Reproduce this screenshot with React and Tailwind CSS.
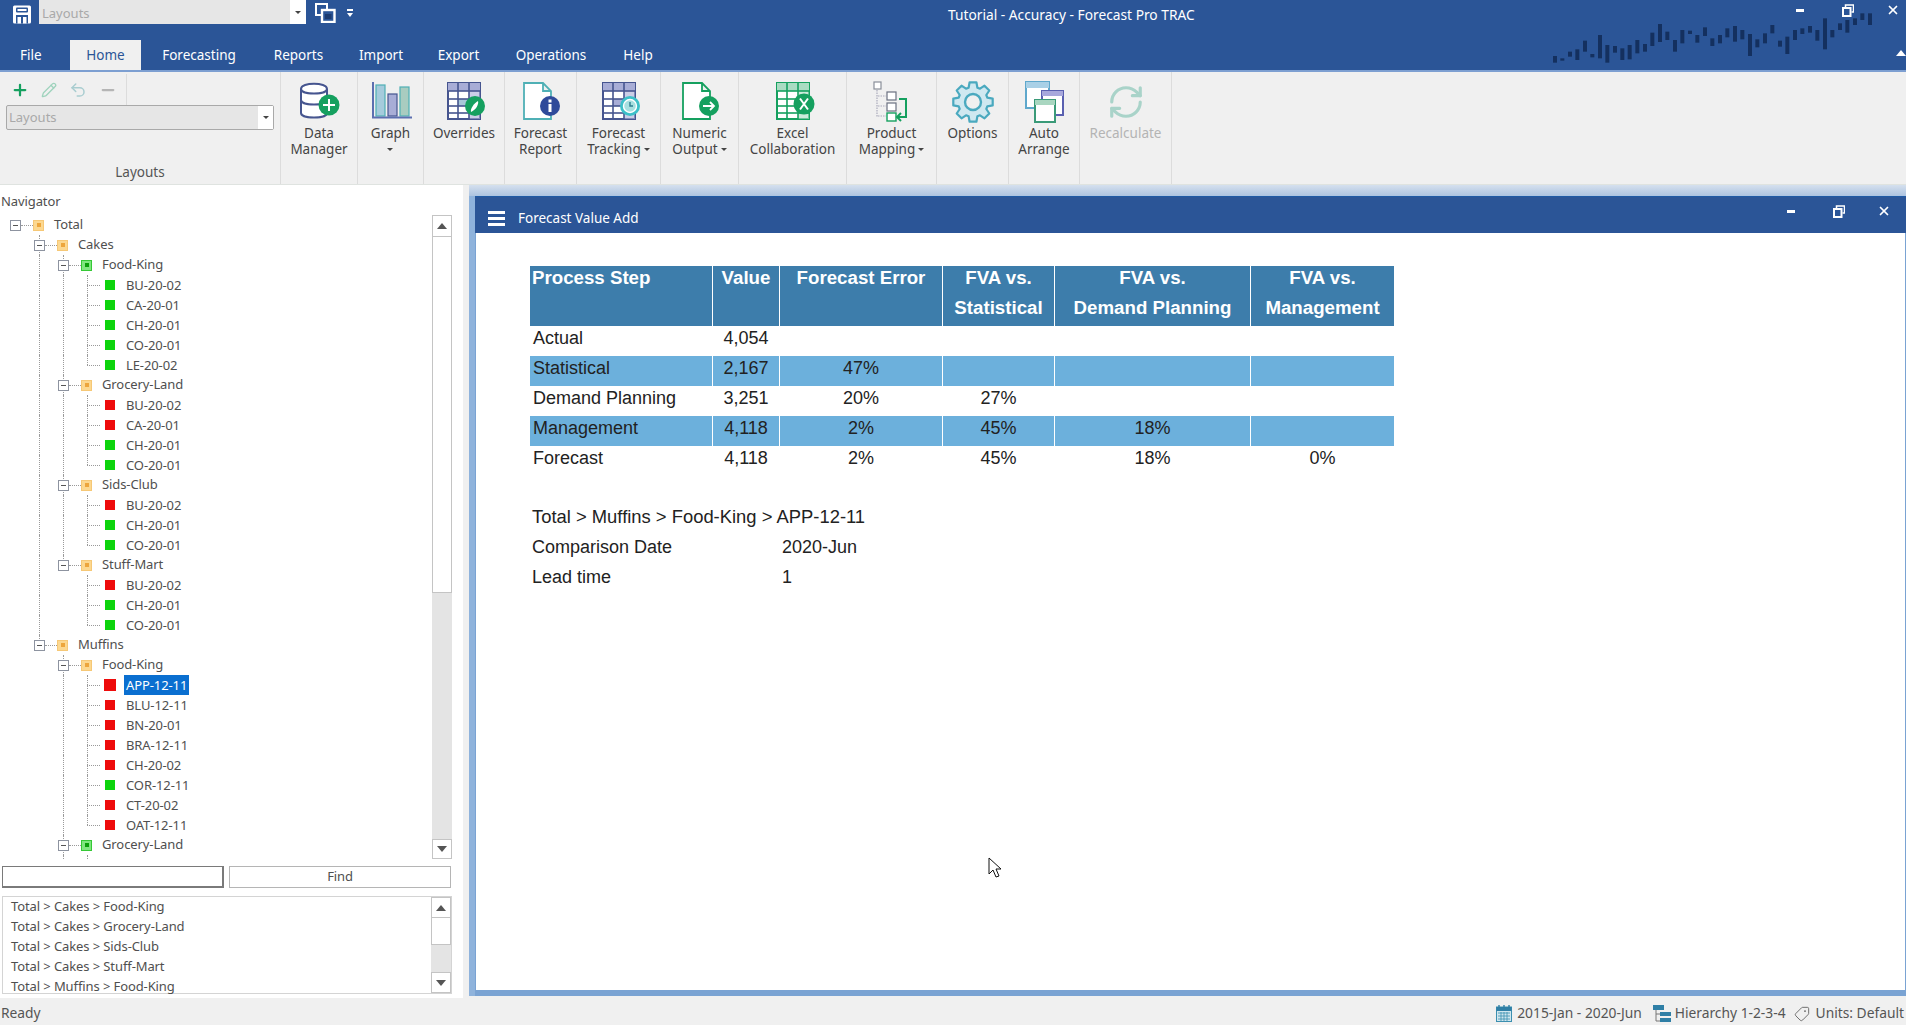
import React from "react";
import { RefreshCw, X, Tag, Plus, Minus, Pencil, Undo2 } from "lucide-react";

const NAVY = "#46558f";
const TEAL = "#4fb0b5";
const GREEN = "#15a05f";

const TABS = [
  { label: "File", cls: "w-[70px] pl-[20px]" },
  { label: "Home", cls: "w-[71px] justify-center bg-[#f0f0f0] text-[#2b5597]" },
  { label: "Forecasting", cls: "w-[116px] justify-center" },
  { label: "Reports", cls: "w-[83px] justify-center" },
  { label: "Import", cls: "w-[82px] justify-center" },
  { label: "Export", cls: "w-[73px] justify-center" },
  { label: "Operations", cls: "w-[112px] justify-center" },
  { label: "Help", cls: "w-[62px] justify-center" },
];

// x, top, bottom of each sparkline bar
const SPARK = [
  [30, 138, 158], [52, 145, 152], [75, 125, 140], [97, 118, 150], [120, 92, 125], [142, 132, 142],
  [165, 75, 145], [187, 105, 158], [210, 108, 128], [232, 115, 150], [254, 105, 148], [277, 90, 130],
  [300, 102, 125], [322, 68, 108], [345, 42, 96], [367, 65, 90], [390, 90, 125], [412, 60, 100],
  [435, 62, 72], [457, 75, 98], [480, 52, 78], [502, 85, 108], [525, 75, 100], [547, 55, 82],
  [570, 48, 95], [592, 60, 88], [615, 72, 138], [637, 88, 112], [660, 70, 100], [682, 45, 70],
  [705, 92, 110], [727, 80, 132], [750, 60, 90], [772, 55, 72], [795, 48, 68], [817, 60, 92],
  [840, 25, 118], [862, 60, 82], [885, 40, 60], [907, 30, 68], [930, 25, 45], [952, 10, 30], [975, 10, 45],
];

const TREE = [
  {
    label: "Cakes",
    groups: [
      { label: "Food-King", color: "green", items: [["BU-20-02", "g"], ["CA-20-01", "g"], ["CH-20-01", "g"], ["CO-20-01", "g"], ["LE-20-02", "g"]] },
      { label: "Grocery-Land", items: [["BU-20-02", "r"], ["CA-20-01", "r"], ["CH-20-01", "g"], ["CO-20-01", "g"]] },
      { label: "Sids-Club", items: [["BU-20-02", "r"], ["CH-20-01", "g"], ["CO-20-01", "g"]] },
      { label: "Stuff-Mart", items: [["BU-20-02", "r"], ["CH-20-01", "g"], ["CO-20-01", "g"]] },
    ],
  },
  {
    label: "Muffins",
    groups: [
      {
        label: "Food-King",
        items: [["APP-12-11", "r", true], ["BLU-12-11", "r"], ["BN-20-01", "r"], ["BRA-12-11", "r"], ["CH-20-02", "r"], ["COR-12-11", "g"], ["CT-20-02", "r"], ["OAT-12-11", "r"]],
      },
      { label: "Grocery-Land", color: "green", items: [["BLU-12-11", "g"]] },
    ],
  },
];

const RESULTS = [
  "Total > Cakes > Food-King",
  "Total > Cakes > Grocery-Land",
  "Total > Cakes > Sids-Club",
  "Total > Cakes > Stuff-Mart",
  "Total > Muffins > Food-King",
];

const ROWS = [
  { cells: ["Actual", "4,054", "", "", "", ""] },
  { cells: ["Statistical", "2,167", "47%", "", "", ""], shade: true },
  { cells: ["Demand Planning", "3,251", "20%", "27%", "", ""] },
  { cells: ["Management", "4,118", "2%", "45%", "18%", ""], shade: true },
  { cells: ["Forecast", "4,118", "2%", "45%", "18%", "0%"] },
];

const HEADERS = [
  { lines: ["Process Step"], cls: "text-left pl-[2px]" },
  { lines: ["Value"] },
  { lines: ["Forecast Error"] },
  { lines: ["FVA vs.", "Statistical"] },
  { lines: ["FVA vs.", "Demand Planning"] },
  { lines: ["FVA vs.", "Management"] },
];

// eight toothed outline for the Options icon
const gearPath = () => {
  const pts = [];
  for (let i = 0; i < 8; i++) {
    const a = (i * Math.PI) / 4;
    [[-0.3, 15], [-0.17, 20], [0.17, 20], [0.3, 15]].forEach(([d, r]) => {
      pts.push(`${(22 + r * Math.sin(a + d)).toFixed(1)} ${(21 + r * Math.cos(a + d)).toFixed(1)}`);
    });
  }
  return `M${pts.join("L")}Z`;
};

const Icon = ({ children }) => (
  <svg width="44" height="42" viewBox="0 0 44 42" fill="none">
    {children}
  </svg>
);

const Grid = ({ stroke, fill, fill2 }) => (
  <g>
    <rect x="6" y="2" width="32" height="36" fill="#fff" stroke={stroke} strokeWidth="2" />
    <rect x="6" y="2" width="32" height="8" fill={fill} />
    <rect x="16" y="18" width="11" height="7" fill={fill2} />
    <rect x="27" y="10" width="11" height="28" fill={fill} opacity="0.6" />
    {[10, 18, 25, 32].map((y) => (
      <line key={y} x1="6" x2="38" y1={y} y2={y} stroke={stroke} strokeWidth="1.6" />
    ))}
    {[16, 27].map((x) => (
      <line key={x} x1={x} x2={x} y1="2" y2="38" stroke={stroke} strokeWidth="1.6" />
    ))}
  </g>
);

const Doc = ({ stroke }) => (
  <path d="M5 2h19l8 8v28H5z M24 2v8h8" fill="#fff" stroke={stroke} strokeWidth="1.8" />
);

const DataManagerIcon = () => (
  <Icon>
    <path d="M4 8c0-7 26-7 26 0v24c0 6-26 6-26 0z" fill="#fff" stroke={NAVY} strokeWidth="2" />
    <path d="M4 8c0 6 26 6 26 0M4 19c0 6 26 6 26 0" stroke={NAVY} strokeWidth="2" />
    <circle cx="32" cy="24" r="10.5" fill={GREEN} />
    <path d="M32 18v12M26 24h12" stroke="#fff" strokeWidth="2" />
  </Icon>
);

const GraphIcon = () => (
  <Icon>
    <rect x="7" y="4" width="9" height="31" fill="#a5cbdc" stroke={TEAL} strokeWidth="1.2" />
    <rect x="19" y="13" width="9" height="22" fill="#a8add6" stroke={NAVY} strokeWidth="1.2" />
    <rect x="31" y="6" width="9" height="29" fill="#a9ccc0" stroke={TEAL} strokeWidth="1.2" />
    <path d="M4 1v35.5h39" stroke="#5c6fb0" strokeWidth="2" />
  </Icon>
);

const OverridesIcon = () => (
  <Icon>
    <Grid stroke={NAVY} fill="#a8add6" fill2="#a8c8d8" />
    <circle cx="33" cy="25" r="10" fill={GREEN} />
    <path d="M29 31c-1-3 3-9 7-11 1 3-2 9-7 11z" fill="#fff" />
  </Icon>
);

const ReportIcon = () => (
  <Icon>
    <Doc stroke={TEAL} />
    <circle cx="31" cy="25" r="10" fill="#2f4a9a" />
    <rect x="29.5" y="23" width="3" height="8" fill="#fff" />
    <rect x="29.5" y="18.5" width="3" height="3" fill="#fff" />
  </Icon>
);

const TrackingIcon = () => (
  <Icon>
    <Grid stroke={NAVY} fill="#a8add6" fill2="#a8add6" />
    <circle cx="33" cy="25" r="10" fill="#3cc0c8" />
    <circle cx="33" cy="25" r="6.5" fill="#a8e0e0" stroke="#fff" strokeWidth="1.4" />
    <path d="M33 21v4h3" stroke="#2f7f90" strokeWidth="1.4" />
  </Icon>
);

const NumericIcon = () => (
  <Icon>
    <Doc stroke={GREEN} />
    <circle cx="31" cy="25" r="10" fill={GREEN} />
    <path d="M25 25h11M32 21l4 4-4 4" stroke="#fff" strokeWidth="1.8" />
  </Icon>
);

const ExcelIcon = () => (
  <Icon>
    <Grid stroke={GREEN} fill="#a9dcc2" fill2="#ffffff" />
    <circle cx="33" cy="23" r="10.5" fill={GREEN} />
    <path d="M29 17.5l8 11M37 17.5l-8 11" stroke="#fff" strokeWidth="2" />
  </Icon>
);

const MappingIcon = () => (
  <Icon>
    <rect x="4" y="1" width="7" height="7" fill="#fff" stroke="#8a8f9a" strokeWidth="1.2" />
    <path d="M7 9v27M8 15h8M8 25h8M8 35h8" stroke="#aab" strokeWidth="1.2" strokeDasharray="1.5 1" />
    <rect x="17" y="11" width="9" height="8" fill="#fff" stroke="#6a7080" strokeWidth="1.2" />
    <rect x="17" y="22" width="9" height="8" fill="#fff" stroke="#6a7080" strokeWidth="1.2" />
    <rect x="17" y="32" width="9" height="8" fill="#fff" stroke={GREEN} strokeWidth="1.4" />
    <path d="M29 18h7v18h-8M31 32l-4 4 4 4" stroke={GREEN} strokeWidth="2" />
  </Icon>
);

const ArrangeIcon = () => (
  <Icon>
    <rect x="4" y="1" width="23" height="26" fill="#fff" stroke="#5fa8cc" strokeWidth="2" />
    <rect x="4" y="1" width="23" height="6" fill="#a9d0e6" />
    <rect x="20" y="10" width="21" height="24" fill="#fff" stroke="#5a60b0" strokeWidth="2" />
    <rect x="20" y="10" width="21" height="5" fill="#a8a8dc" />
    <rect x="13" y="19" width="20" height="22" fill="#fff" stroke="#3a9a78" strokeWidth="2" />
    <rect x="13" y="19" width="20" height="5" fill="#a9d6c0" />
  </Icon>
);

const OptionsIcon = () => (
  <Icon>
    <path d={gearPath()} fill="#cfe8f0" stroke="#4aa9bf" strokeWidth="2.2" strokeLinejoin="round" />
    <circle cx="22" cy="21" r="8" fill="#f0f0f0" stroke="#4aa9bf" strokeWidth="2.4" />
  </Icon>
);

const RecalcIcon = () => <RefreshCw size={38} strokeWidth={2} color="#a9d3c9" className="mt-[2px]" />;

const RIBBON = [
  { w: "w-[77px]", icon: DataManagerIcon, lines: ["Data", "Manager"] },
  { w: "w-[66px]", icon: GraphIcon, lines: ["Graph"], arrowBelow: true },
  { w: "w-[81px]", icon: OverridesIcon, lines: ["Overrides"] },
  { w: "w-[72px]", icon: ReportIcon, lines: ["Forecast", "Report"] },
  { w: "w-[84px]", icon: TrackingIcon, lines: ["Forecast", "Tracking"], arrow: true },
  { w: "w-[78px]", icon: NumericIcon, lines: ["Numeric", "Output"], arrow: true },
  { w: "w-[108px]", icon: ExcelIcon, lines: ["Excel", "Collaboration"] },
  { w: "w-[90px]", icon: MappingIcon, lines: ["Product", "Mapping"], arrow: true },
  { w: "w-[72px]", icon: OptionsIcon, lines: ["Options"] },
  { w: "w-[71px]", icon: ArrangeIcon, lines: ["Auto", "Arrange"] },
  { w: "w-[92px]", icon: RecalcIcon, lines: ["Recalculate"], muted: true },
];

const Caret = () => (
  <span className="inline-block w-0 h-0 border-x-[3px] border-t-[3px] border-x-transparent border-t-[#444]" />
);

const Triangle = ({ down }) => (
  <svg width="10" height="6" viewBox="0 0 10 6">
    <path d={down ? "M0 0h10L5 6z" : "M0 6h10L5 0z"} fill="#555" />
  </svg>
);

const ScrollBtn = ({ down, cls }) => (
  <div className={`flex items-center justify-center bg-white border border-[#c4c4c4] ${cls}`}>
    <Triangle down={down} />
  </div>
);

const RestoreIcon = () => (
  <svg width="12" height="13" viewBox="0 0 12 13" fill="none" stroke="#fff">
    <path d="M3.5 3V1h8v7h-2" strokeWidth="1.5" />
    <rect x="1" y="4" width="7.5" height="8" strokeWidth="2" />
  </svg>
);

const WinControls = ({ cls }) => (
  <div className={`flex items-center ${cls}`}>
    <span className="w-[8px] h-[3px] bg-white" />
    <span className="ml-[38px]"><RestoreIcon /></span>
    <span className="ml-[32px]"><X size={14} strokeWidth={3} color="#fff" /></span>
  </div>
);

const Guide = ({ x, half }) => {
  const left = { 39: "left-[39px]", 63: "left-[63px]", 87: "left-[87px]" }[x];
  return <span className={`absolute top-0 border-l border-dotted border-[#9a9a9a] ${left} ${half ? "h-[10px]" : "h-5"}`} />;
};

const Expander = () => (
  <span className="relative z-10 flex items-center justify-center w-[11px] h-[11px] bg-white border border-[#8d93a0]">
    <span className="w-[5px] h-px bg-[#555]" />
  </span>
);

const Dots = ({ cls }) => <span className={`border-t border-dotted border-[#999] ${cls}`} />;

const Node = ({ label, pl, color, guides }) => (
  <div className={`relative flex items-center h-5 ${pl}`}>
    {guides}
    <Expander />
    <Dots cls="w-[12px]" />
    <span
      className={`flex items-center justify-center w-[11px] h-[11px] border ${
        color === "green" ? "bg-[#7fe67f] border-[#35c935]" : "bg-[#fcd890] border-[#f6c876]"
      }`}
    >
      <span className={`w-[4px] h-[4px] ${color === "green" ? "bg-[#0aa00a]" : "bg-[#eda63c]"}`} />
    </span>
    <span className="ml-[10px]">{label}</span>
  </div>
);

const Leaf = ({ label, status, selected, guides }) => (
  <div className="relative flex items-center h-5 pl-[87px]">
    {guides}
    <Dots cls="w-[13px]" />
    <span
      className={`${selected ? "ml-[4px] mr-[8px] w-[12px] h-[12px]" : "ml-[5px] mr-[9px] w-[10px] h-[10px]"} ${
        status === "g" ? "bg-[#0dd40d]" : "bg-[#ee0b0b]"
      }`}
    />
    <span className={`h-5 px-[2px] leading-5 ${selected ? "bg-[#0a6fd0] text-white" : ""}`}>{label}</span>
  </div>
);

const NavTree = () => (
  <div className="flex-1 h-full overflow-hidden">
    <Node label="Total" pl="pl-[10px]" />
    {TREE.map((cat, c) => {
      const lastCat = c === TREE.length - 1;
      return (
        <React.Fragment key={cat.label}>
          <Node label={cat.label} pl="pl-[34px]" guides={<Guide x={39} half={lastCat} />} />
          {cat.groups.map((grp, g) => {
            const lastGrp = !lastCat && g === cat.groups.length - 1;
            return (
              <React.Fragment key={grp.label}>
                <Node
                  label={grp.label}
                  pl="pl-[58px]"
                  color={grp.color}
                  guides={
                    <>
                      {!lastCat && <Guide x={39} />}
                      <Guide x={63} half={lastGrp} />
                    </>
                  }
                />
                {grp.items.map(([name, status, selected], i) => (
                  <Leaf
                    key={name}
                    label={name}
                    status={status}
                    selected={selected}
                    guides={
                      <>
                        {!lastCat && <Guide x={39} />}
                        {!lastGrp && <Guide x={63} />}
                        <Guide x={87} half={i === grp.items.length - 1} />
                      </>
                    }
                  />
                ))}
              </React.Fragment>
            );
          })}
        </React.Fragment>
      );
    })}
  </div>
);

const Sparkline = () => (
  <svg className="absolute left-[1545px] top-[10px]" width="340" height="60" viewBox="0 0 1020 180">
    {SPARK.map(([x, y1, y2]) => (
      <rect key={x} x={x - 6} y={y1} width="12" height={y2 - y1} fill="#14305f" />
    ))}
  </svg>
);

const Header = () => (
  <div className="relative bg-[#2b5597] h-[72px] border-b-2 border-[#7d9fd1] text-white shrink-0">
    <div className="flex items-center h-10">
      <svg className="ml-[12px] mb-[12px]" width="20" height="19" viewBox="0 0 20 19">
        <rect x="1" y="0.5" width="18" height="18" rx="1.5" fill="#fff" />
        <rect x="4" y="2.5" width="12" height="5" rx="1" fill="#2b5597" />
        <rect x="5.5" y="4" width="9" height="2" fill="#fff" />
        <rect x="4" y="10" width="12" height="8.5" fill="#2b5597" />
        <rect x="5.5" y="12" width="3.5" height="6.5" fill="#fff" />
        <rect x="11" y="12" width="3.5" height="6.5" fill="#fff" />
      </svg>
      <div className="ml-[7px] mb-[16px] w-[267px] h-6 flex bg-[#e6e6e6] text-[#a9a9a9] text-[13px]">
        <span className="flex-1 pl-[3px] leading-[26px]">Layouts</span>
        <span className="w-[16px] bg-white flex items-center justify-center"><Caret /></span>
      </div>
      <svg className="ml-[9px] mb-[14px]" width="21" height="20" viewBox="0 0 21 20" fill="none" stroke="#fff">
        <rect x="1" y="1" width="11" height="11" strokeWidth="2" />
        <rect x="7" y="7" width="12.5" height="12" fill="#2b5597" strokeWidth="2.4" />
        <rect x="10" y="11" width="6.5" height="5" fill="#1c3b70" stroke="none" />
      </svg>
      <span className="ml-[11px] mb-[14px] flex flex-col items-center gap-[2px]">
        <span className="w-[6px] h-[2px] bg-white" />
        <span className="w-0 h-0 border-x-[3px] border-t-[4px] border-x-transparent border-t-white" />
      </span>
      <span className="ml-[595px] mb-[9px] text-[13.75px] w-[500px]">Tutorial - Accuracy - Forecast Pro TRAC</span>
      <WinControls cls="absolute right-[6px] top-[3px]" />
    </div>
    <div className="flex h-[30px] text-[13.5px]">
      {TABS.map((tab) => (
        <div key={tab.label} className={`flex items-center ${tab.cls}`}>
          {tab.label}
        </div>
      ))}
    </div>
    <Sparkline />
    <span className="absolute right-0 top-[50px] w-0 h-0 border-x-[5px] border-b-[6px] border-x-transparent border-b-white" />
  </div>
);

const Ribbon = () => (
  <div className="flex h-[113px] bg-[#f0f0f0] border-b border-[#dfe3e0] text-[13.5px] leading-4 text-[#444] shrink-0">
    <div className="w-[281px] flex flex-col border-r border-[#dcdcdc]">
      <div className="flex items-center h-[33px] pt-[2px]">
        <div className="flex items-center gap-[12px] pl-[11px] pr-[9px] h-full border-r border-[#dcdcdc]">
          <Plus size={18} strokeWidth={3} color={GREEN} />
          <Pencil size={16} strokeWidth={2} color="#9fd3bd" />
          <Undo2 size={18} strokeWidth={2} color="#a9cdd0" />
          <Minus size={18} strokeWidth={3} color="#b5b5b5" />
        </div>
      </div>
      <div className="ml-[6px] w-[268px] h-[25px] flex bg-[#e6e6e6] border border-[#a9a9a9] rounded-[2px] text-[#a9a9a9] text-[13px]">
        <span className="flex-1 pl-[2px] leading-[23px]">Layouts</span>
        <span className="w-[15px] bg-white flex items-center justify-center"><Caret /></span>
      </div>
      <div className="text-center mt-[34px] text-[#555]">Layouts</div>
    </div>
    {RIBBON.map(({ w, icon: RibbonIcon, lines, arrow, arrowBelow, muted }) => (
      <div key={lines.join()} className={`${w} flex flex-col items-center pt-[9px] border-r border-[#dcdcdc]`}>
        <div className="h-[44px] flex justify-center"><RibbonIcon /></div>
        <div className={`text-center whitespace-nowrap ${muted ? "text-[#b4b4b4]" : ""}`}>
          {lines.map((line, i) => (
            <div key={line} className="flex items-center justify-center gap-[3px]">
              {line}
              {arrow && i === lines.length - 1 && <Caret />}
            </div>
          ))}
          {arrowBelow && <div className="flex justify-center h-4 items-center"><Caret /></div>}
        </div>
      </div>
    ))}
  </div>
);

const Sidebar = () => (
  <div className="w-[463px] h-[813px] bg-white text-[13px] tracking-[-0.1px] text-[#4f4f4f] shrink-0">
    <div className="h-[30px] pl-px pt-[6px] leading-5">Navigator</div>
    <div className="flex h-[644px]">
      <NavTree />
      <div className="w-[20px] mr-[11px] flex flex-col bg-[#e4e4e4]">
        <ScrollBtn cls="h-[22px]" />
        <div className="h-[356px] bg-white border-x border-b border-[#c4c4c4]" />
        <div className="flex-1" />
        <ScrollBtn down cls="h-[20px]" />
      </div>
    </div>
    <div className="flex gap-[5px] mt-[7px] ml-[2px] h-[22px]">
      <div className="w-[222px] border-2 border-[#7a7a7a] border-l border-t" />
      <div className="w-[222px] border border-[#b5b5b5] flex items-center justify-center">Find</div>
    </div>
    <div className="flex mt-[8px] ml-[2px] w-[450px] h-[98px] border border-[#d4d4d4]">
      <div className="flex-1 pl-[8px] -mt-px leading-5">
        {RESULTS.map((line) => (
          <div key={line}>{line}</div>
        ))}
      </div>
      <div className="w-[20px] flex flex-col bg-[#e4e4e4]">
        <ScrollBtn cls="h-[21px]" />
        <div className="h-[27px] bg-white border-x border-b border-[#c4c4c4]" />
        <div className="flex-1" />
        <ScrollBtn down cls="h-[21px]" />
      </div>
    </div>
  </div>
);

const FvaTable = () => (
  <table className="table-fixed w-[865px] border-collapse font-['Liberation_Sans',sans-serif] text-[18px] leading-6 text-[#222]">
    <colgroup>
      <col className="w-[183px]" />
      <col className="w-[67px]" />
      <col className="w-[163px]" />
      <col className="w-[112px]" />
      <col className="w-[196px]" />
      <col className="w-[144px]" />
    </colgroup>
    <thead>
      <tr className="bg-[#3d7dab] text-white h-[60px] text-[18.7px]">
        {HEADERS.map((h, i) => (
          <th key={i} className={`align-top border-x border-white font-bold ${h.cls || "text-center"}`}>
            {h.lines.map((line) => (
              <div key={line} className="pb-[6px] whitespace-nowrap">{line}</div>
            ))}
          </th>
        ))}
      </tr>
    </thead>
    <tbody>
      {ROWS.map((row) => (
        <tr key={row.cells[0]} className={`h-[30px] ${row.shade ? "bg-[#6cb0dc]" : ""}`}>
          {row.cells.map((cell, i) => (
            <td
              key={i}
              className={`align-top border-x p-0 ${row.shade ? "border-white" : "border-transparent"} ${i === 0 ? "pl-[3px]" : "text-center"}`}
            >
              {cell}
            </td>
          ))}
        </tr>
      ))}
    </tbody>
  </table>
);

const ForecastWindow = () => (
  <div className="flex-1 flex flex-col h-[813px] pt-[11px] bg-gradient-to-b from-[#d5e0ee] to-[#a9c1df] bg-[length:100%_12px] bg-no-repeat">
    <div className="flex-1 flex flex-col border-l-[6px] border-[#8fb3dc] mb-[2px]">
      <div className="h-[37px] bg-[#2b5597] border-t border-[#1f5aa5] flex items-center text-white pl-[13px] shrink-0">
        <span className="flex flex-col gap-[3px] w-[17px] mt-[7px]">
          <span className="h-[3px] bg-white" />
          <span className="h-[3px] bg-white" />
          <span className="h-[3px] bg-white" />
        </span>
        <span className="ml-[13px] mt-[7px] text-[13.5px]">Forecast Value Add</span>
        <WinControls cls="ml-auto mr-[15px] mb-[8px]" />
      </div>
      <div className="relative flex-1 bg-white border-l border-b-[6px] border-r border-[#7aa3d3] pl-[53px] pt-[33px]">
        <FvaTable />
        <div className="mt-[26px] pl-[3px] font-['Liberation_Sans',sans-serif] text-[18px] leading-[30px] text-[#222]">
          <div className="text-[18.4px]">Total &gt; Muffins &gt; Food-King &gt; APP-12-11</div>
          <div className="flex"><span className="w-[250px]">Comparison Date</span>2020-Jun</div>
          <div className="flex"><span className="w-[250px]">Lead time</span>1</div>
        </div>
        <svg className="absolute left-[512px] top-[624px]" width="14" height="21" viewBox="0 0 14 21">
          <path d="M1 1v16l4-4 3 7 3-1-3-7h5z" fill="#fff" stroke="#111" strokeWidth="1" />
        </svg>
      </div>
    </div>
  </div>
);

const StatusBar = () => (
  <div className="flex items-center h-[27px] pt-[4px] bg-[#f0f0f0] text-[13.8px] text-[#555] shrink-0">
    <span className="pl-px">Ready</span>
    <div className="ml-auto flex items-center pr-[2px]">
      <svg width="16" height="17" viewBox="0 0 16 17">
        <rect x="0.5" y="2" width="15" height="14.5" fill="#cfe6ee" stroke="#3b8fb0" />
        <rect x="0.5" y="2" width="15" height="4" fill="#2f7fa6" />
        <path d="M3 0v3M8 0v3M13 0v3" stroke="#2f7fa6" strokeWidth="1.4" />
        <path d="M2 8h12M2 11h12M2 14h12M5 7v9M8 7v9M11 7v9" stroke="#3b8fb0" strokeWidth="0.8" />
      </svg>
      <span className="ml-[5px]">2015-Jan - 2020-Jun</span>
      <svg className="ml-[10px]" width="19" height="18" viewBox="0 0 19 18">
        <rect x="1" y="0" width="11" height="5" fill="#2f7fa6" />
        <path d="M4 5v11h4M4 9h4" stroke="#777" fill="none" />
        <rect x="8" y="7" width="11" height="4" fill="#2f7fa6" />
        <rect x="8" y="13" width="11" height="4" fill="#2f7fa6" />
      </svg>
      <span className="ml-[4px]">Hierarchy 1-2-3-4</span>
      <Tag size={16} strokeWidth={1.4} color="#666" className="ml-[8px] rotate-90" />
      <span className="ml-[6px]">Units: Default</span>
    </div>
  </div>
);

export default function App() {
  return (
    <div className="w-[1906px] h-[1025px] overflow-hidden flex flex-col bg-[#f0f0f0] font-['Noto_Sans',sans-serif]">
      <Header />
      <Ribbon />
      <div className="flex flex-1 min-h-0">
        <Sidebar />
        <div className="w-[6px] shrink-0" />
        <ForecastWindow />
      </div>
      <StatusBar />
    </div>
  );
}
